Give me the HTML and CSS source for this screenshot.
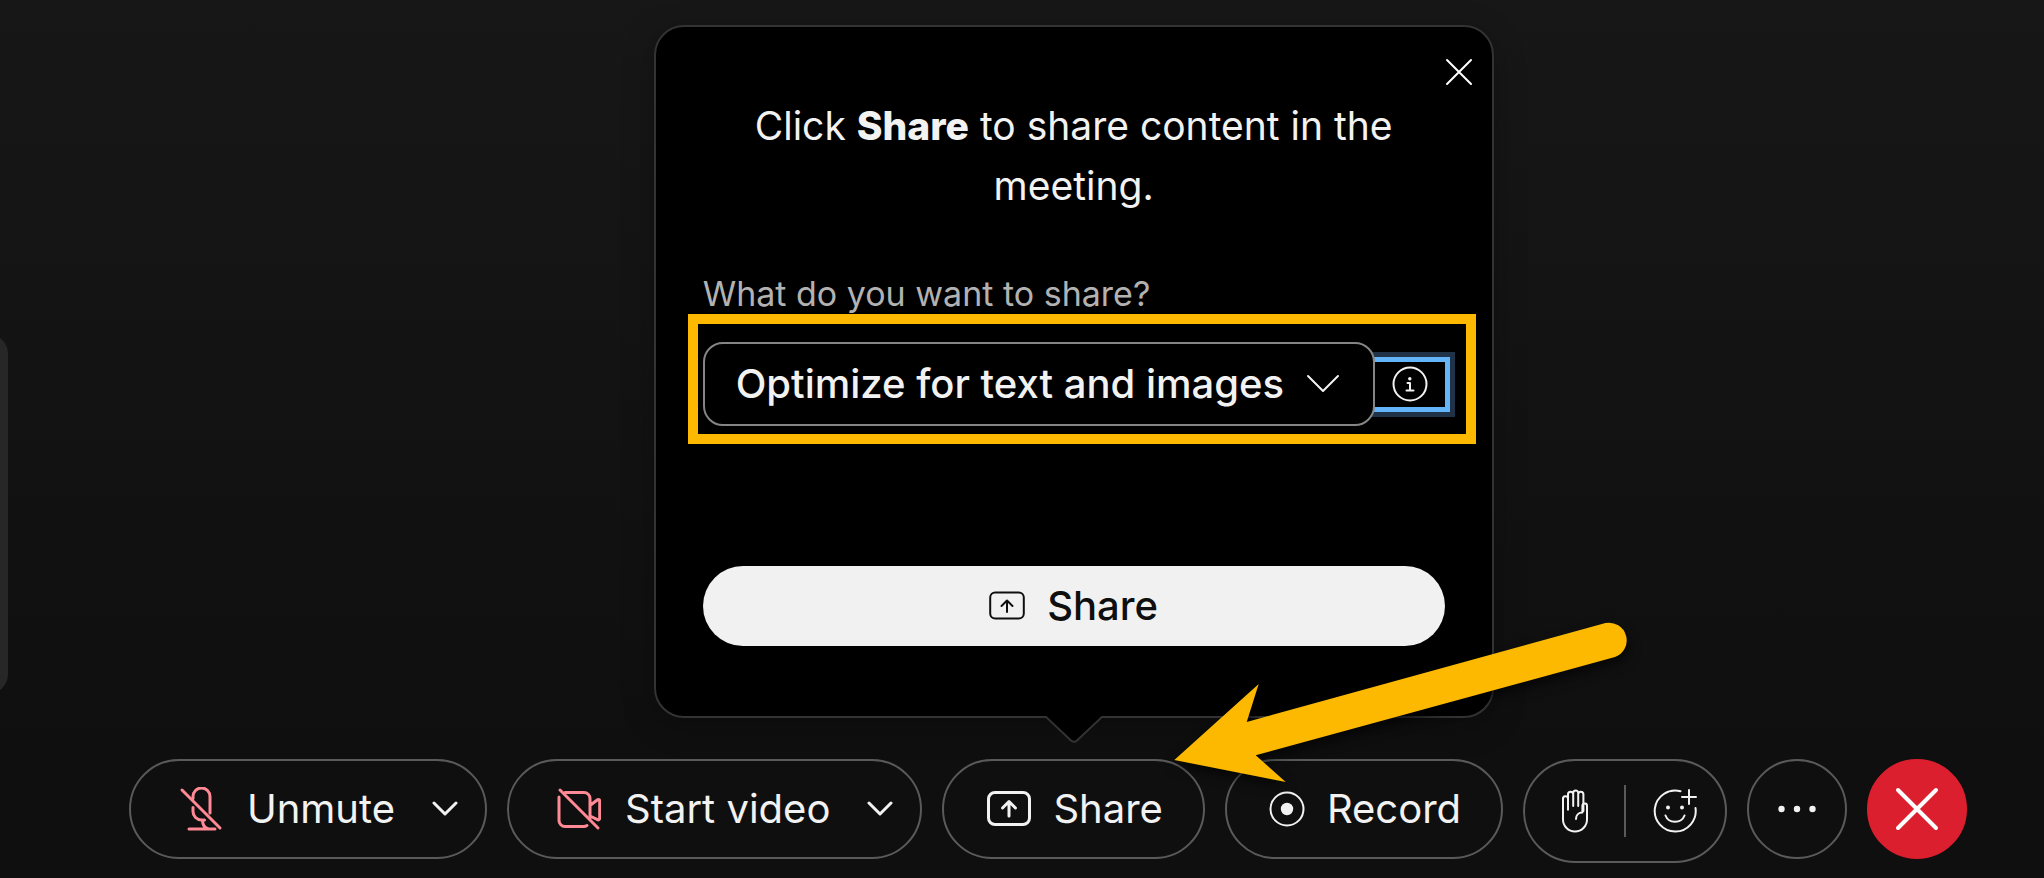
FILE: index.html
```
<!DOCTYPE html>
<html lang="en">
<head>
<meta charset="utf-8">
<title>Meeting controls</title>
<meta name="viewport" content="width=device-width, initial-scale=1">
<link rel="stylesheet" href="styles.css">
</head>
<body>
<main class="stage">
  <div class="side-panel"></div>
  <div class="toolbar">
    <div class="pill">
      <button class="pill-main" type="button">
        <svg class="icon icon-muted" viewBox="0 0 44 44" aria-hidden="true">
          <path d="M3 3 41 41"/>
          <path d="M14 11.500V9.500a8.500 8.500 0 0 1 17 0V26M14 20.500v4a8.500 8.500 0 0 0 8.500 8.500h3M23.500 33c0 5 2.500 8 6 9M10 42h26"/>
        </svg>
        <span>Unmute</span>
      </button>
      <button class="pill-menu" type="button" aria-label="Audio options">
        <svg class="chevron" viewBox="0 0 26 16" aria-hidden="true"><path d="M2 2 13 13 24 2"/></svg>
      </button>
    </div>
    <div class="pill">
      <button class="pill-main" type="button">
        <svg class="icon icon-muted" viewBox="0 0 44 44" aria-hidden="true">
          <path d="M3 3 41 41"/>
          <path d="M8 5.500H27a6 6 0 0 1 6 6V31M2 10V33.500a6 6 0 0 0 6 6H26.500a6 6 0 0 0 3.500-1M33 18.500 40.500 12.700a1.400 1.400 0 0 1 2.200 1.100V31.500a1.400 1.400 0 0 1-2.200 1.100L33 29"/>
        </svg>
        <span>Start video</span>
      </button>
      <button class="pill-menu" type="button" aria-label="Video options">
        <svg class="chevron" viewBox="0 0 26 16" aria-hidden="true"><path d="M2 2 13 13 24 2"/></svg>
      </button>
    </div>
    <div class="share-anchor">
      <button class="pill pill-share" type="button">
        <svg class="icon" viewBox="0 0 44 44" aria-hidden="true">
          <rect x="1.500" y="5.500" width="41" height="32" rx="6.500"/>
          <path d="M22 29V15M15.500 21 22 14.500 28.500 21"/>
        </svg>
        <span>Share</span>
      </button>
      <section class="popover" role="dialog" aria-label="Share content">
        <button class="popover-close" type="button" aria-label="Close">
          <svg viewBox="0 0 28 28" aria-hidden="true"><path d="M2 2 26 26M26 2 2 26"/></svg>
        </button>
        <p class="popover-title">Click <strong>Share</strong> to share content in the meeting.</p>
        <label class="field-label" for="share-mode">What do you want to share?</label>
        <div class="field-row">
          <div class="select-box">
            <select class="select" id="share-mode">
              <option>Optimize for text and images</option>
            </select>
            <svg class="select-chevron" viewBox="0 0 34 20" aria-hidden="true"><path d="M2 2 17 17 32 2"/></svg>
          </div>
          <button class="info" type="button" aria-label="More information">
            <svg viewBox="0 0 36 36" aria-hidden="true">
              <circle cx="18" cy="18" r="16.500"/>
              <path d="M15.500 17H18v7M14.500 24.500h7"/>
              <circle class="solid" cx="17.800" cy="12.800" r="1.700"/>
            </svg>
          </button>
          <div class="highlight"></div>
        </div>
        <button class="share-submit" type="button">
          <svg class="submit-icon" viewBox="0 0 36 36" aria-hidden="true">
            <rect x="1.200" y="4.500" width="33.600" height="26" rx="5"/>
            <path d="M18 24V13M12.500 18 18 12.500 23.500 18"/>
          </svg>
          <span>Share</span>
        </button>
        <svg class="popover-tail" viewBox="0 0 56 27" aria-hidden="true">
          <path class="tail-fill" d="M0 0H56L30.500 25q-2.500 2-5 0Z"/>
          <path class="tail-line" d="M0 1 25 24.500q3 2.500 6 0L56 1"/>
        </svg>
      </section>
      <svg class="arrow" viewBox="1160 610 480 190" aria-hidden="true">
        <path d="M1174.300 760 1258.700 684 1246.700 722 1605.500 623.100A17.700 17.700 0 0 1 1615 657.100L1255.700 755.300 1285.700 782Z"/>
      </svg>
    </div>
    <button class="pill pill-record" type="button">
      <svg class="record-icon" viewBox="0 0 36 36" aria-hidden="true">
        <circle cx="18" cy="18" r="16.500"/>
        <circle class="solid" cx="18" cy="18" r="6.200"/>
      </svg>
      <span>Record</span>
    </button>
    <div class="pill pill-react">
      <button class="react" type="button" aria-label="Raise hand">
        <svg class="icon" viewBox="0 0 44 44" aria-hidden="true">
          <path d="M15 20.500V5.300a2.600 2.600 0 0 1 5.200 0V17V3.900a2.500 2.500 0 0 1 5 0V17V5.300a2.600 2.600 0 0 1 5.200 0V22"/>
          <path d="M15 20.500V9.500a2.500 2.500 0 0 0-5 .5V30.500a12 12 0 0 0 24 0V17a2.300 2.300 0 0 0-4.600-.5V23.500c-4 0-6.400 3-6.400 6.500"/>
        </svg>
      </button>
      <span class="divider"></span>
      <button class="react" type="button" aria-label="Reactions">
        <svg class="icon icon-face" viewBox="0 0 44 44" aria-hidden="true">
          <path d="M27.500 2.200A20.500 20.500 0 1 0 42.500 19M36 1V15M29 8H43M12.500 26.500a10 9 0 0 0 19 0"/>
          <circle class="solid" cx="15" cy="18.500" r="2"/>
          <circle class="solid" cx="29" cy="18.500" r="2"/>
        </svg>
      </button>
    </div>
    <button class="pill pill-round" type="button" aria-label="More options">
      <svg class="icon" viewBox="0 0 44 44" aria-hidden="true">
        <circle class="solid" cx="6.500" cy="22" r="3.200"/>
        <circle class="solid" cx="22" cy="22" r="3.200"/>
        <circle class="solid" cx="37.500" cy="22" r="3.200"/>
      </svg>
    </button>
    <button class="pill pill-round pill-end" type="button" aria-label="Leave meeting">
      <svg class="icon" viewBox="0 0 44 44" aria-hidden="true"><path d="M3 3 41 41M41 3 3 41"/></svg>
    </button>
  </div>
</main>
</body>
</html>
```
FILE: styles.css
```
* {
  box-sizing: border-box;
}

body {
  margin: 0;
  background: #0f0f0f;
  color: #f2f2f2;
  font-family: Inter, "Liberation Sans", sans-serif;
  font-size: 40px;
  line-height: 60px;
}

button,
select {
  margin: 0;
  padding: 0;
  border: 0;
  background: none;
  color: inherit;
  font: inherit;
}

svg {
  display: block;
  flex: none;
  fill: none;
  stroke: currentColor;
  stroke-width: 3;
  stroke-linecap: round;
  stroke-linejoin: round;
}

.solid {
  fill: currentColor;
  stroke: none;
}

.stage {
  position: relative;
  display: flex;
  flex-direction: column;
  justify-content: flex-end;
  min-height: 100vh;
  overflow: hidden;
  background: linear-gradient(#171717, #0f0f0f 85%);
}

.side-panel {
  position: absolute;
  top: 334px;
  left: 0;
  width: 8px;
  height: 360px;
  overflow: hidden;
}

.side-panel::before {
  content: "";
  position: absolute;
  inset: 0 0 0 -60px;
  border-radius: 20px;
  background: #272727;
}

.toolbar {
  display: flex;
  align-items: flex-start;
  justify-content: center;
  gap: 20px;
  padding: 0 0 15px 52px;
}

.pill {
  display: flex;
  align-items: center;
  height: 100px;
  border: 2px solid #5a5a5a;
  border-radius: 52px;
  white-space: nowrap;
}

.pill-main {
  display: flex;
  align-items: center;
  gap: 24px;
  height: 100%;
  padding-left: 48px;
}

.pill-menu {
  display: flex;
  align-items: center;
  height: 100%;
  padding: 0 27px 0 37px;
}

.icon {
  width: 44px;
  height: 44px;
}

.icon-muted {
  color: #ff8a95;
}

.chevron {
  width: 26px;
  height: 16px;
}

.share-anchor {
  position: relative;
}

.pill-share {
  gap: 22px;
  padding: 0 40px 0 43px;
}

.pill-record {
  gap: 22px;
  padding: 0 40px 0 42px;
}

.record-icon {
  width: 36px;
  height: 36px;
  stroke-width: 2;
}

.pill-react {
  height: 104px;
}

.react {
  display: flex;
  align-items: center;
  justify-content: center;
  width: 100px;
  height: 100%;
}

.react .icon {
  stroke-width: 2;
}

.divider {
  width: 2px;
  height: 52px;
  margin: 0 -1px;
  background: #5a5a5a;
}

.pill-round {
  justify-content: center;
  width: 100px;
  border-radius: 50%;
}

.pill-end {
  border-color: #dc1f2e;
  background: #dc1f2e;
  color: #ffffff;
}

.pill-end .icon {
  stroke-width: 4;
}

.popover {
  position: absolute;
  bottom: calc(100% + 41px);
  left: 50%;
  width: 840px;
  padding: 69px 47px 70px;
  border: 2px solid #333333;
  border-radius: 30px;
  background: #000000;
  box-shadow: 0 8px 32px rgba(0, 0, 0, 0.25);
  transform: translateX(-50%);
}

.popover-close {
  position: absolute;
  top: 31px;
  right: 19px;
  color: #ffffff;
}

.popover-close svg {
  width: 28px;
  height: 28px;
  stroke-width: 2;
}

.popover-title {
  margin: 0 0 56px;
  font-size: 39px;
  text-align: center;
}

.popover-title strong {
  font-weight: 800;
}

.field-label {
  display: block;
  color: #b2b2b2;
  font-size: 34px;
  line-height: 44px;
}

.field-row {
  position: relative;
  display: flex;
  align-items: center;
  margin-top: 26px;
}

.select-box {
  position: relative;
  z-index: 1;
  flex: 1;
}

.select {
  display: block;
  width: 100%;
  height: 84px;
  padding: 0 90px 0 31px;
  border: 2px solid #858585;
  border-radius: 20px;
  background: #000000;
  font-weight: 500;
  appearance: none;
}

.select-chevron {
  position: absolute;
  top: 32px;
  right: 35px;
  width: 34px;
  height: 20px;
  stroke-width: 2;
  pointer-events: none;
}

.info {
  display: flex;
  align-items: center;
  justify-content: center;
  width: 70px;
  height: 45px;
  box-shadow: 0 0 0 5px #64b4fa, 0 0 0 10px #1f3247;
}

.info svg {
  width: 36px;
  height: 36px;
  stroke-width: 2;
}

.highlight {
  position: absolute;
  inset: -28px -31px -18px -15px;
  z-index: 2;
  border: 10px solid #fcb900;
  pointer-events: none;
}

.share-submit {
  display: flex;
  align-items: center;
  justify-content: center;
  gap: 22px;
  width: 100%;
  height: 80px;
  margin-top: 140px;
  border-radius: 40px;
  background: #f1f1f1;
  color: #0f0f0f;
  font-weight: 500;
}

.submit-icon {
  width: 36px;
  height: 36px;
  stroke-width: 2;
}

.popover-tail {
  position: absolute;
  top: 100%;
  left: 50%;
  width: 56px;
  height: 27px;
  transform: translateX(-50%);
}

.tail-fill {
  fill: #000000;
  stroke: none;
}

.tail-line {
  stroke: #333333;
  stroke-width: 2;
}

.arrow {
  position: absolute;
  top: -149px;
  left: 218px;
  z-index: 3;
  width: 480px;
  height: 190px;
  fill: #fcb900;
  stroke: none;
  filter: drop-shadow(2px 6px 6px rgba(0, 0, 0, 0.6));
  pointer-events: none;
}
```
